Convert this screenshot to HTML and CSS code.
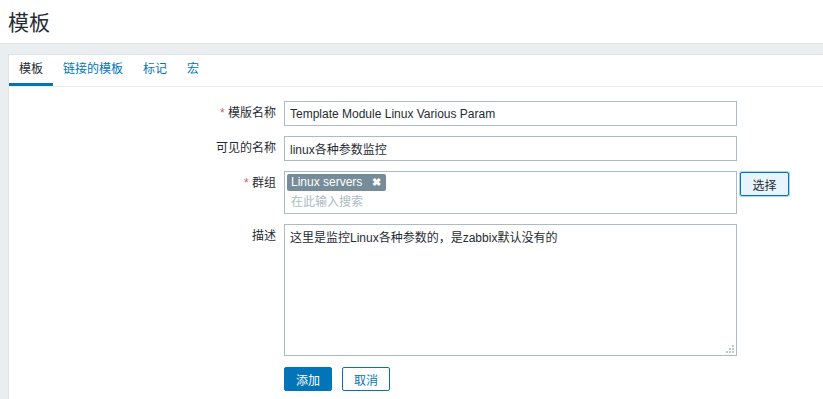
FILE: index.html
```html
<!DOCTYPE html>
<html lang="zh-CN">
<head>
    <meta charset="UTF-8">
    <meta name="viewport" content="width=device-width, initial-scale=1.0">
    <title>模板</title>
    <link rel="stylesheet" href="styles.css">
</head>
<body>
    <header class="page-header">
        <h1>模板</h1>
    </header>
    <main class="wrapper">
        <div class="panel">
            <ul class="tabs">
                <li class="tab active">模板</li>
                <li class="tab">链接的模板</li>
                <li class="tab">标记</li>
                <li class="tab">宏</li>
            </ul>
            <form class="form-grid" id="templateForm">
                <label class="form-label" for="templateName"><span class="required">*</span> 模版名称</label>
                <input class="text-field" type="text" id="templateName" value="Template Module Linux Various Param">
                <div></div>

                <label class="form-label" for="visibleName">可见的名称</label>
                <input class="text-field" type="text" id="visibleName" value="linux各种参数监控">
                <div></div>

                <label class="form-label"><span class="required">*</span> 群组</label>
                <div class="multiselect">
                    <div class="tag">Linux servers <span class="tag-remove">&#10006;</span></div>
                    <div class="placeholder">在此输入搜索</div>
                </div>
                <div><button type="button" class="btn-select">选择</button></div>

                <label class="form-label" for="description">描述</label>
                <div class="textarea-wrap">
                    <textarea class="text-area" id="description">这里是监控Linux各种参数的，是zabbix默认没有的</textarea>
                    <!-- resize grip -->
                    <svg class="grip" width="8" height="8" viewBox="0 0 8 8">
                        <rect x="6" y="0" width="2" height="2"/>
                        <rect x="3" y="3" width="2" height="2"/>
                        <rect x="6" y="3" width="2" height="2"/>
                        <rect x="0" y="6" width="2" height="2"/>
                        <rect x="3" y="6" width="2" height="2"/>
                        <rect x="6" y="6" width="2" height="2"/>
                    </svg>
                </div>
                <div></div>

                <div></div>
                <div class="actions">
                    <button type="submit" class="btn-primary">添加</button>
                    <button type="button" class="btn-alt">取消</button>
                </div>
                <div></div>
            </form>
        </div>
    </main>
</body>
</html>
```

FILE: styles.css
```css
html, body {
    margin: 0;
    padding: 0;
    background-color: #ebeef0;
    font-family: 'Liberation Sans', Arial, 'Noto Sans CJK SC', sans-serif;
    font-size: 12px;
    color: #1f2c33;
    overflow: hidden;
}
.page-header {
    background-color: #ffffff;
    height: 44px;
    border-bottom: 1px solid #dfe4e7;
    box-sizing: border-box;
    padding-left: 8px;
}
.page-header h1 {
    margin: 0;
    font-size: 21px;
    font-weight: normal;
    line-height: 46px;
}
.wrapper {
    padding: 10px 0 0 8px;
}
.panel {
    background-color: #ffffff;
    border: 1px solid #dfe4e7;
    border-right: none;
    border-bottom: none;
    height: 360px;
}
.tabs {
    list-style: none;
    margin: 0;
    padding: 0;
    display: flex;
    height: 31px;
    border-bottom: 1px solid #ebeef0;
}
.tab {
    padding: 0 10px;
    line-height: 28px;
    color: #0275b8;
    border-bottom: 3px solid transparent;
}
.tab.active {
    color: #1f2c33;
    border-bottom-color: #0275b8;
}
.form-grid {
    display: grid;
    grid-template-columns: 275px 453px 1fr;
    row-gap: 10px;
    padding-top: 14px;
}
.form-label {
    text-align: right;
    padding-right: 8px;
    line-height: 25px;
}
.required {
    color: #e45959;
}
.text-field, .text-area, .multiselect {
    box-sizing: border-box;
    width: 453px;
    border: 1px solid #acbbc2;
    font-family: inherit;
    font-size: 12px;
    color: #1f2c33;
    background-color: #ffffff;
    margin: 0;
}
.text-field {
    height: 25px;
    padding: 0 5px;
}
.multiselect {
    height: 43px;
    padding: 2px;
}
.tag {
    display: inline-block;
    background-color: #768d99;
    color: #ffffff;
    height: 17px;
    line-height: 17px;
    padding: 0 5px 0 4px;
    border-radius: 2px;
}
.tag-remove {
    font-size: 11px;
    font-weight: bold;
    margin-left: 6px;
}
.placeholder {
    color: #acbbc2;
    padding: 4px 4px 0;
    line-height: 14px;
}
.btn-select {
    margin: 1px 0 0 3px;
    width: 49px;
    height: 24px;
    background-color: #e8f4fc;
    border: 1px solid #0275b8;
    box-shadow: 0 0 0 1px #a8d2f0;
    border-radius: 2px;
    font-family: inherit;
    font-size: 12px;
    color: #1f2c33;
    padding: 0;
}
.textarea-wrap {
    position: relative;
    height: 132px;
}
.text-area {
    display: block;
    height: 132px;
    padding: 6px 5px;
    resize: none;
    line-height: 14px;
}
.grip {
    position: absolute;
    right: 3px;
    bottom: 3px;
    fill: #c2c9cd;
}
.actions {
    display: flex;
    gap: 10px;
    padding-top: 1px;
}
.btn-primary, .btn-alt {
    width: 48px;
    height: 24px;
    border-radius: 2px;
    font-family: inherit;
    font-size: 12px;
    padding: 0;
}
.btn-primary {
    background-color: #0275b8;
    border: 1px solid #0275b8;
    color: #ffffff;
}
.btn-alt {
    background-color: #ffffff;
    border: 1px solid #0275b8;
    color: #0275b8;
}
```
